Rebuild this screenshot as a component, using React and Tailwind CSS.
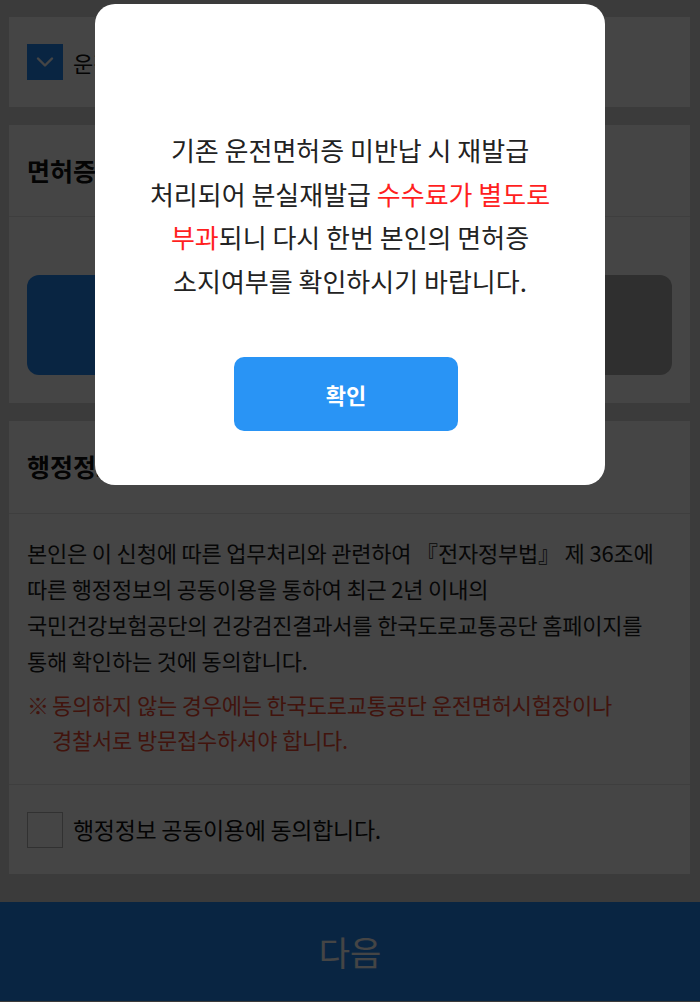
import React from "react";

const font = { fontFamily: '"Noto Sans CJK KR", "Noto Sans", sans-serif' };

function CheckIcon() {
  return (
    <svg width="18" height="12" viewBox="0 0 18 12" fill="none">
      <polyline points="2,2.5 9,9.5 16,2.5" stroke="white" strokeWidth="2.4" strokeLinecap="round" strokeLinejoin="round" />
    </svg>
  );
}

export default function App() {
  return (
    <div className="relative min-h-[1002px] w-full bg-[#d9d9d9]" style={font}>
      <div className="pl-[9px] pr-[10px] pt-[17px]">
        {/* Card 1 */}
        <div className="flex h-[90px] items-center bg-white px-[18px]">
          <div className="flex h-[36px] w-[36px] items-center justify-center bg-[#2489f2]">
            <CheckIcon />
          </div>
          <span className="ml-[10px] text-[22px] text-[#111]">운전면허증 재발급 신청에 동의합니다.</span>
        </div>

        {/* Card 2 */}
        <div className="mt-[18px] bg-white">
          <div className="flex h-[92px] items-center border-b border-[#e6e6e6] px-[18px]">
            <h2 className="text-[25px] font-bold text-[#111]">면허증 소지 여부</h2>
          </div>
          <div className="flex gap-[10px] px-[18px] pb-[28px] pt-[58px]">
            <button className="flex h-[100px] flex-1 items-center justify-center rounded-[12px] bg-[#2489f2] text-[22px] text-white">
              소지하고 있습니다
            </button>
            <button className="flex h-[100px] flex-1 items-center justify-center rounded-[12px] bg-[#adadad] text-[22px] text-white">
              분실하였습니다
            </button>
          </div>
        </div>

        {/* Card 3 */}
        <div className="mt-[18px] bg-white">
          <div className="flex h-[93px] items-center border-b border-[#e6e6e6] px-[18px]">
            <h2 className="text-[25px] font-bold text-[#111]">행정정보 공동이용 동의</h2>
          </div>
          <div className="px-[18px] pb-[27px] pt-[20px]">
            <p className="text-[22px] leading-[36px] tracking-[-0.2px] text-[#1a1a1a]">
              본인은 이 신청에 따른 업무처리와 관련하여 『전자정부법』 제 36조에
              <br />
              따른 행정정보의 공동이용을 통하여 최근 2년 이내의
              <br />
              국민건강보험공단의 건강검진결과서를 한국도로교통공단 홈페이지를
              <br />
              통해 확인하는 것에 동의합니다.
            </p>
            <div className="mt-[9px] flex text-[22px] leading-[35px] tracking-[-0.2px] text-[#f04a33]">
              <span className="w-[25px] shrink-0">※</span>
              <p>
                동의하지 않는 경우에는 한국도로교통공단 운전면허시험장이나
                <br />
                경찰서로 방문접수하셔야 합니다.
              </p>
            </div>
          </div>
          <div className="flex h-[90px] items-center border-t border-[#e6e6e6] px-[18px]">
            <div className="h-[36px] w-[36px] border border-[#b5b5b5] bg-white" />
            <span className="ml-[10px] text-[23px] tracking-[-0.3px] text-[#111]">행정정보 공동이용에 동의합니다.</span>
          </div>
        </div>
      </div>

      {/* Bottom bar */}
      <div className="mt-[28px] flex h-[99px] items-center justify-center bg-[#2489f2]">
        <span className="text-[34px] text-white">다음</span>
      </div>

      {/* Overlay + modal */}
      <div className="absolute inset-0 bg-black/[0.73]" />
      <div className="absolute inset-x-0 top-[4px] flex justify-center">
        <div className="flex w-[510px] flex-col items-center rounded-[20px] bg-white pb-[54px] pt-[124px]">
          <p className="text-center text-[26px] leading-[43.5px] text-[#222]">
            기존 운전면허증 미반납 시 재발급
            <br />
            처리되어 분실재발급 <span className="text-[#ff1f1f]">수수료가 별도로</span>
            <br />
            <span className="text-[#ff1f1f]">부과</span>되니 다시 한번 본인의 면허증
            <br />
            소지여부를 확인하시기 바랍니다.
          </p>
          <button className="mr-[8px] mt-[55px] flex h-[74px] w-[224px] items-center justify-center rounded-[10px] bg-[#2994f5] text-[22px] font-bold text-white">
            확인
          </button>
        </div>
      </div>
    </div>
  );
}
